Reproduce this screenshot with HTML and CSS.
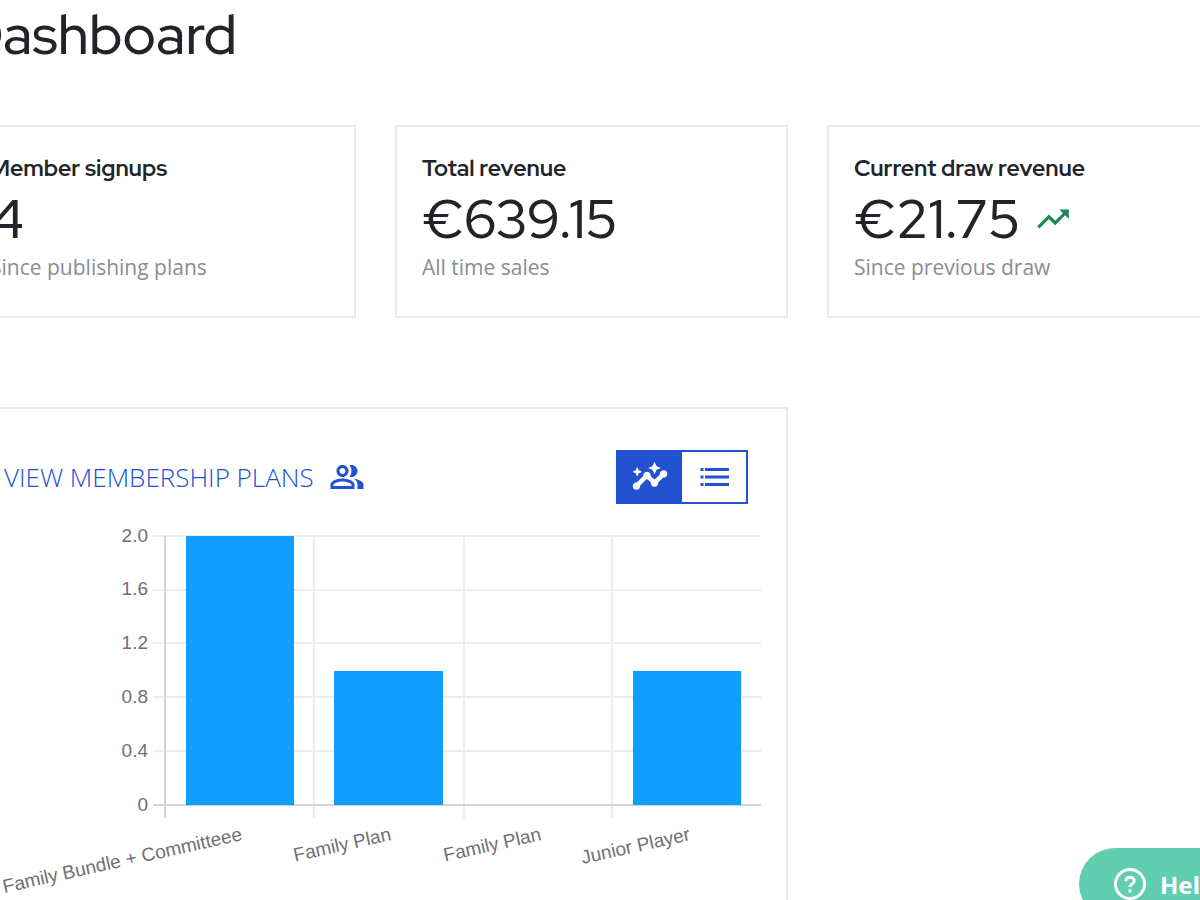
FILE: index.html
```html
<!DOCTYPE html>
<html lang="en">
<head>
<meta charset="utf-8">
<title>Dashboard</title>
<link rel="stylesheet" href="styles.css">
</head>
<body>
<main class="page">
  <h1 class="page-title">Dashboard</h1>
  <div class="grid">
    <section class="card stat">
      <h2 class="stat-label">Member signups</h2>
      <p class="stat-value">4</p>
      <p class="stat-note">Since publishing plans</p>
    </section>
    <section class="card stat">
      <h2 class="stat-label">Total revenue</h2>
      <p class="stat-value">€639.15</p>
      <p class="stat-note">All time sales</p>
    </section>
    <section class="card stat">
      <h2 class="stat-label">Current draw revenue</h2>
      <p class="stat-value">€21.75
        <svg class="trend" viewBox="0 0 24 24" aria-hidden="true"><path d="m16 6 2.29 2.29-4.88 4.88-4-4L2 16.59 3.41 18l6-6 4 4 6.3-6.29L22 12V6z"/></svg>
      </p>
      <p class="stat-note">Since previous draw</p>
    </section>
    <section class="card plans">
      <header class="plans-head">
        <a class="plans-link" href="#plans">VIEW MEMBERSHIP PLANS
          <svg class="people" viewBox="0 0 24 24" aria-hidden="true"><path d="M16.67 13.13C18.04 14.06 19 15.32 19 17v3h4v-3c0-2.18-3.57-3.47-6.33-3.87zM15 12c2.21 0 4-1.79 4-4s-1.79-4-4-4c-.47 0-.91.1-1.33.24C14.5 5.27 15 6.58 15 8s-.5 2.73-1.33 3.76c.42.14.86.24 1.33.24zM9 12c2.21 0 4-1.79 4-4s-1.79-4-4-4-4 1.79-4 4 1.79 4 4 4zm0-6c1.1 0 2 .9 2 2s-.9 2-2 2-2-.9-2-2 .9-2 2-2zM9 13c-2.67 0-8 1.34-8 4v3h16v-3c0-2.66-5.33-4-8-4zm6 5H3v-.99C3.2 16.29 6.3 15 9 15s5.8 1.29 6 2v1z"/></svg>
        </a>
        <div class="toggle">
          <button class="toggle-btn active" type="button" aria-label="Chart view" aria-pressed="true">
            <svg viewBox="0 0 24 24" aria-hidden="true"><path d="M21 8c-1.45 0-2.26 1.44-1.93 2.51l-3.55 3.56c-.3-.09-.74-.09-1.04 0l-2.55-2.55C12.27 10.45 11.46 9 10 9c-1.45 0-2.27 1.44-1.93 2.52l-4.56 4.55C2.44 15.74 1 16.55 1 18c0 1.1.9 2 2 2 1.45 0 2.26-1.44 1.93-2.51l4.55-4.56c.3.09.74.09 1.04 0l2.55 2.55C12.73 16.55 13.54 18 15 18c1.45 0 2.27-1.44 1.93-2.52l3.56-3.55C21.56 12.26 23 11.45 23 10c0-1.1-.9-2-2-2zM15 9l.94-2.07L18 6l-2.06-.93L15 3l-.92 2.07L12 6l2.08.93zM3.5 11 4 9l2-.5L4 8l-.5-2L3 8l-2 .5L3 9z"/></svg>
          </button>
          <button class="toggle-btn" type="button" aria-label="List view" aria-pressed="false">
            <svg viewBox="0 0 24 24" aria-hidden="true"><path d="M3 6h2v2H3zM6 6h16v2H6zM3 11h2v2H3zM6 11h16v2H6zM3 16h2v2H3zM6 16h16v2H6z"/></svg>
          </button>
        </div>
      </header>
      <svg class="chart" viewBox="-10 516 771 384" role="img" aria-label="Members per plan">
        <path class="grid-line" d="M153 536H761M153 590H761M153 643H761M153 697H761M153 751H761M314 536V818M464 536V818M612 536V818"/>
        <path class="axis-line" d="M153 805H761M165 536V818"/>
        <path class="bar" d="M186 536H294V805H186zM334 671H443V805H334zM633 671H741V805H633z"/>
        <g class="y-labels">
          <text x="148" y="542">2.0</text>
          <text x="148" y="595">1.6</text>
          <text x="148" y="649">1.2</text>
          <text x="148" y="703">0.8</text>
          <text x="148" y="757">0.4</text>
          <text x="148" y="811">0</text>
        </g>
        <g class="x-labels">
          <text transform="translate(243 840) rotate(-12.5)">Family Bundle + Committeee</text>
          <text transform="translate(392 840) rotate(-12.5)">Family Plan</text>
          <text transform="translate(542 840) rotate(-12.5)">Family Plan</text>
          <text transform="translate(691 840) rotate(-12.5)">Junior Player</text>
        </g>
      </svg>
    </section>
  </div>
</main>
<button class="help" type="button">
  <svg viewBox="0 0 32 32" aria-hidden="true"><circle cx="16" cy="16" r="14.5"/><path d="M11.8 13.2c0-2.5 1.8-4 4.2-4s4.2 1.500 4.200 3.700c0 3-4.200 3-4.200 6.100M16 21.500v3"/></svg>
  Help
</button>
</body>
</html>
```
FILE: styles.css
```css
* {
  box-sizing: border-box;
}

body {
  margin: 0;
  height: 100vh;
  overflow: hidden;
  background: #fff;
  color: #212529;
  font-family: "Open Sans", sans-serif;
}

.page {
  margin: 0 -20px 0 -37px;
}

h1,
h2,
p {
  margin: 0;
}

.page-title,
.stat-label,
.stat-value {
  font-family: "Red Hat Display", Lato, sans-serif;
}

.page-title {
  padding: 2px 0 59px;
  font-size: 56px;
  font-weight: 500;
  line-height: 64px;
}

.grid {
  display: grid;
  grid-template-columns: repeat(3, 1fr);
  column-gap: 39px;
  row-gap: 89px;
}

.card {
  padding: 26px 25px;
  border: 2px solid #e9ebee;
}

.stat {
  height: 193px;
}

.stat-label {
  font-size: 23px;
  font-weight: 700;
  line-height: 31px;
}

.stat-value {
  display: flex;
  align-items: center;
  gap: 14px;
  font-size: 54px;
  font-weight: 500;
  line-height: 69px;
}

.trend {
  width: 38px;
  height: 38px;
  fill: #198754;
}

.stat-note {
  color: #868e96;
  font-size: 21px;
  line-height: 28px;
}

.plans {
  grid-column: span 2;
  padding-top: 41px;
  padding-bottom: 0;
}

.plans-head {
  display: flex;
  align-items: center;
  justify-content: space-between;
  padding: 0 13px 0 14px;
}

.plans-link {
  display: flex;
  align-items: center;
  gap: 15px;
  color: #2251d1;
  font-size: 26px;
  font-weight: 300;
  line-height: 32px;
  text-decoration: none;
}

.people {
  width: 36px;
  height: 36px;
  fill: #2251d1;
}

.toggle {
  display: flex;
  border: 2px solid #2251d1;
}

.toggle-btn {
  display: flex;
  align-items: center;
  justify-content: center;
  width: 64px;
  height: 50px;
  padding: 0;
  border: 0;
  background: #fff;
}

.toggle-btn.active {
  background: #2251d1;
}

.toggle-btn svg {
  width: 36px;
  height: 36px;
  fill: #2251d1;
}

.toggle-btn.active svg {
  fill: #fff;
  stroke: #fff;
  stroke-width: 1;
}

.chart {
  display: block;
  width: 100%;
  margin-top: 12px;
}

.grid-line,
.axis-line {
  fill: none;
  stroke: #ededed;
  stroke-width: 2;
}

.axis-line {
  stroke: #d4d4d4;
}

.bar {
  fill: #119cff;
}

.y-labels,
.x-labels {
  fill: #707070;
  font-family: "Liberation Sans", Arial, sans-serif;
  font-size: 19px;
  text-anchor: end;
}

.help {
  position: fixed;
  right: -51px;
  bottom: -20px;
  display: flex;
  align-items: center;
  gap: 14px;
  height: 72px;
  padding: 0 36px 0 35px;
  border: 0;
  border-radius: 36px;
  background: #61ceb0;
  color: #fff;
  font-family: "Noto Sans", sans-serif;
  font-size: 24px;
  font-weight: 700;
}

.help svg {
  width: 32px;
  height: 32px;
  fill: none;
  stroke: #fff;
  stroke-width: 3;
}
```
